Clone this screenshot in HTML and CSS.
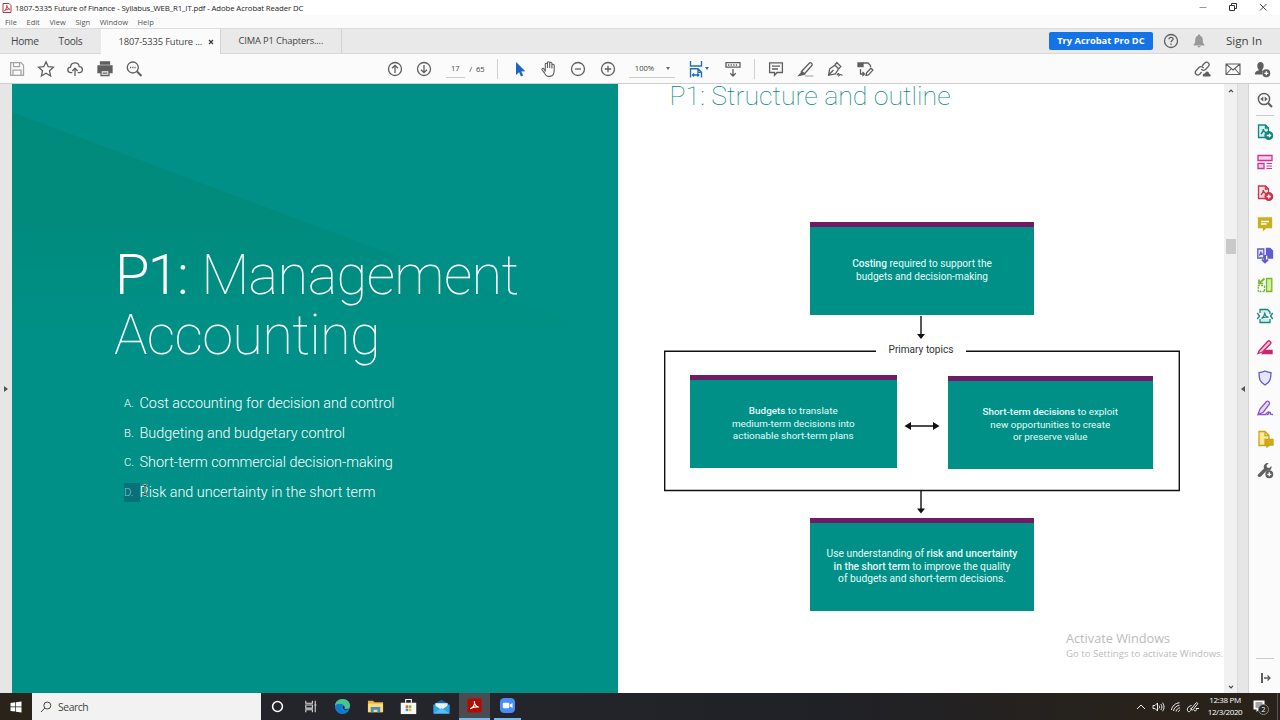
FILE: index.html
```
<!DOCTYPE html>
<html lang="en">
  <head>
    <meta charset="UTF-8" />
    <meta name="viewport" content="width=device-width, initial-scale=1.0" />
    <title>1807-5335 Future of Finance - Syllabus_WEB_R1_IT.pdf</title>
    <link rel="stylesheet" href="styles.css">
  </head>
  <body>
    <header class="titlebar">
      <svg class="app-icon" viewBox="0 0 10 10"><path d="M1 .5h6l2 2v7H1z" fill="#fff" stroke="#b5343c"/><path d="M2.5 7.8C4.5 6 5 4 4.8 2.3c.3 2 1.5 3.7 3 4C6 6 4 6.500 2.500 7.800z" fill="none" stroke="#c9252d" stroke-width=".9"/></svg>
      <span class="window-title">1807-5335 Future of Finance - Syllabus_WEB_R1_IT.pdf - Adobe Acrobat Reader DC</span>
      <div class="window-buttons">
        <svg viewBox="0 0 10 10"><path d="M1.500 5.500h7" stroke="#999"/></svg>
        <svg viewBox="0 0 10 10"><path d="M1.500 3.500h5v5h-5zM3.500 3.500v-2h5v5h-2" fill="none" stroke="#333"/></svg>
        <svg viewBox="0 0 10 10"><path d="M2 2l6.500 6.500M8.500 2L2 8.500" stroke="#333" stroke-width=".9"/></svg>
      </div>
    </header>

    <nav class="menubar">
      <span>File</span><span>Edit</span><span>View</span><span>Sign</span><span>Window</span><span>Help</span>
    </nav>

    <div class="tabs">
      <div class="tab-fixed"><span>Home</span><span>Tools</span></div>
      <div class="tab active"><span>1807-5335 Future ...</span><svg viewBox="0 0 6 6"><path d="M1 1l4 4M5 1L1 5" stroke="#333" stroke-width="1.100"/></svg></div>
      <div class="tab"><span>CIMA P1 Chapters....</span></div>
      <div class="account">
        <button class="try">Try Acrobat Pro DC</button>
        <svg class="icon help" viewBox="0 0 18 18"><circle cx="9" cy="9" r="6.500"/><path d="M7 7.300c0-2.700 4.100-2.600 4.100-.2 0 1.400-2.100 1.600-2.100 3.200M9 11.600v1.300"/></svg>
        <svg class="icon bell" viewBox="0 0 18 18"><path d="M9 2.500c.8 0 1.200.5 1.200 1.300 1.900.7 2.600 2.300 2.600 4.700 0 2 .5 3 1.500 4v.9H3.700v-.9c1-1 1.500-2 1.500-4 0-2.400.7-4 2.600-4.700 0-.8.4-1.300 1.200-1.300zM7.500 14h3c-.1 1-.7 1.400-1.500 1.400S7.600 15 7.500 14z"/></svg>
        <span class="sign-in">Sign In</span>
      </div>
    </div>

    <div class="toolbar">
      <div class="tools file-tools">
        <svg class="icon muted" viewBox="0 0 18 18"><path d="M2.600 2.600h10.300l2.600 2.600v10.200H2.600zM5.500 2.600v4h6v-4M5 15.400v-5.300h8v5.300"/></svg>
        <svg class="icon" viewBox="0 0 18 18"><path d="M9 1.800l2.200 4.900 5.200.5-3.900 3.500 1.100 5.300L9 13.300 4.400 16l1.100-5.300-3.900-3.500 5.200-.5z"/></svg>
        <svg class="icon" viewBox="0 0 18 18"><path d="M6.300 12.600H5C.8 12.600.9 7.500 4.500 7.200 4.900 1.600 12.600 1.400 13.200 6.700c4.300.1 4.200 5.900.2 5.900h-1.700M9 16V8.500M6.300 11L9 8.200l2.700 2.800"/></svg>
        <svg class="icon" viewBox="0 0 18 18"><path class="solid" d="M4.500 2h9v2h-9zM2 6h14v6.500h-2.500V10h-9v2.500H2z"/><path d="M5 10.500h8v5H5zM6.500 13.200h5"/></svg>
        <svg class="icon" viewBox="0 0 18 18"><circle cx="7.800" cy="7.500" r="5.500"/><path d="M12 11.500l4.500 4.500" stroke-width="2"/><path d="M5 7.500h1.200M7.200 7.500h1.200M9.400 7.500h1.200" stroke-width="1.500"/></svg>
      </div>
      <div class="tools page-tools">
        <svg class="icon" viewBox="0 0 18 18"><circle cx="9" cy="9" r="6.500"/><path d="M9 13V5.500M6 8.300l3-3 3 3"/></svg>
        <svg class="icon" viewBox="0 0 18 18"><circle cx="9" cy="9" r="6.500"/><path d="M9 5v7.500M6 9.700l3 3 3-3"/></svg>
        <span class="field page-no">17</span>
        <span class="page-total">/&nbsp; 65</span>
      </div>
      <i class="divider"></i>
      <div class="tools view-tools">
        <svg class="icon pointer" viewBox="0 0 18 18"><path d="M5 2v13l3.100-2.700L10 16.400l2.200-1-1.900-3.900 4-.3z"/></svg>
        <svg class="icon" viewBox="0 0 18 18"><path d="M5.300 10V4.300c0-1.500 2.200-1.500 2.200 0V8 2.800c0-1.500 2.200-1.500 2.200 0V8 3.300c0-1.500 2.200-1.500 2.200 0v5.200-3.200c0-1.400 2.300-1.400 2.300 0v5.200c0 7.300-7.800 7.400-9.600 2.600L1.900 9.800C1.500 8.300 3.300 7.900 4 9l1.300 2.400z" stroke-width="1.100"/></svg>
        <svg class="icon" viewBox="0 0 18 18"><circle cx="9" cy="9" r="6.500"/><path d="M6 9h6"/></svg>
        <svg class="icon" viewBox="0 0 18 18"><circle cx="9" cy="9" r="6.500"/><path d="M5.800 9h6.400M9 5.800v6.400"/></svg>
      </div>
      <div class="field zoom"><span>100%</span><i class="caret"></i></div>
      <div class="fit">
        <svg class="icon blue" viewBox="0 0 18 18"><path d="M3.500 1v5h11V1M3.500 17.500V8.800h7.500l3.500 3.400v5.300M11 9v3.400h3.300M5.500 15h6M7 13.500L5.500 15 7 16.500M10.300 13.500l1.500 1.500-1.500 1.500" stroke-width="1.400"/></svg>
        <i class="caret blue"></i>
      </div>
      <svg class="icon keys" viewBox="0 0 18 18"><path d="M2 2.700h14v4.500H2zM9 9v7M6.300 13.300L9 16l2.700-2.700"/><path d="M4 5h10" stroke-dasharray="1.300 1.300" stroke-width="1.600"/></svg>
      <i class="divider second"></i>
      <div class="tools comment-tools">
        <svg class="icon" viewBox="0 0 18 18"><path d="M2.600 2.800h12.800v9.700H10L7.500 15.300v-2.800H2.600zM5 6.200h8M5 9h6"/></svg>
        <svg class="icon" viewBox="0 0 18 18"><path d="M8 16h8.500" stroke="#ccc" stroke-width="2"/><path class="solid" d="M2 15.500l3-3.500 2.200 2.300z"/><path d="M4.500 11.500L12.500 3c1-1 3.500 1 2.500 2.300l-7.500 8.500z"/></svg>
        <svg class="icon" viewBox="0 0 18 18"><path d="M2.500 15.300l1.200-6.500L9 5.200l3.600 3.600-3.300 5.200zM2.700 15l4.700-5M9 5l1.800-2.500 4 4L12.500 9M11 15.300c1.500-3 2.100-1.500 2 0 1.500-1.500 1.500-.5 3.500 0"/></svg>
        <svg class="icon" viewBox="0 0 18 18"><path class="solid" d="M2 3h5v3.500H2z"/><path d="M7 3h5l2.500 2.500V7M4.500 9v5h4M6.500 12l2 2-2 2M10 15.500l.6-2.600 4.300-4.700 2 1.900-4.500 4.900z"/></svg>
      </div>
      <div class="tools share-tools">
        <svg class="icon" viewBox="0 0 18 18"><path d="M8 6l2.700-3c2.700-2.200 5.800.8 3.700 3.400L11.500 9.500C9.800 11 8 10.200 7.500 9M9.600 8C8 6 6 6.500 5 7.500l-3 3.200c-2.100 2.800 1 5.700 3.700 3.500L7.500 12"/><path class="solid" stroke="none" d="M9 16.500c-1-2.500 1-3.500 2-3 1-3 4-2 4 .2 2 0 2 2.800 1 2.800z"/></svg>
        <svg class="icon" viewBox="0 0 18 18"><path d="M2 4h14v10.500H2zM2 4l7 6 7-6M2 14.500L7 9M16 14.500L11 9" stroke-width="1.100"/></svg>
        <svg class="icon" viewBox="0 0 18 18"><path class="solid" stroke="none" d="M2 14.500c0-3 1-3.300 4-4.300C3.500 7.500 3.500 2 7.500 2s4 5.500 1.500 8.200l1 .8c-1 1-1 2.500-.5 3.500z"/><circle class="solid" cx="13.300" cy="13.300" r="3.300"/><path d="M11.300 13.300h4M13.300 11.300v4" stroke="#fff"/></svg>
      </div>
    </div>

    <main class="workspace">
      <div class="left-strip"><i></i></div>

      <section class="page cover">
        <h1><b>P1:</b> Management<br><span class="line-two">Accounting</span></h1>
        <ol>
          <li><i>A.</i>Cost accounting for decision and control</li>
          <li><i>B.</i>Budgeting and budgetary control</li>
          <li><i>C.</i>Short-term commercial decision-making</li>
          <li><i class="selected">D.</i>Risk and uncertainty in the short term</li>
        </ol>
        <svg class="text-cursor" viewBox="0 0 8 12"><path d="M1 1h2l1 1 1-1h2M4 2v8M1 11h2l1-1 1 1h2" fill="none" stroke="#9fc9cb" stroke-width="2"/><path d="M1 1h2l1 1 1-1h2M4 2v8M1 11h2l1-1 1 1h2" fill="none" stroke="#234b50"/></svg>
      </section>

      <section class="page outline">
        <h2>P1: Structure and outline</h2>
        <svg class="connectors" viewBox="0 0 606 609">
          <path class="line" d="M258 267.200H46.700V406.500H561.300V267.200H348M303 232v19M303 406.500v18.500M290 342h28"/>
          <path d="M299 250h8l-4 5zM299 424.500h8l-4 5zM293 338v8l-6.500-4zM315 338v8l6.500-4z"/>
        </svg>
        <div class="box costing"><p><b>Costing</b> required to support the<br>budgets and decision-making</p></div>
        <div class="frame-label">Primary topics</div>
        <div class="box budgets"><p><b>Budgets</b> to translate<br>medium-term decisions into<br>actionable short-term plans</p></div>
        <div class="box decisions"><p><b>Short-term decisions</b> to exploit<br>new opportunities to create<br>or preserve value</p></div>
        <div class="box risk"><p>Use understanding of <b>risk and uncertainty<br>in the short term</b> to improve the quality<br>of budgets and short-term decisions.</p></div>
        <div class="activate"><strong>Activate Windows</strong><span>Go to Settings to activate Windows.</span></div>
      </section>

      <div class="scrollbar">
        <svg viewBox="0 0 6 4"><path d="M1 3.200l2-2 2 2"/></svg>
        <div class="track"><i class="thumb"></i></div>
        <svg viewBox="0 0 6 4"><path d="M1 .8l2 2 2-2"/></svg>
      </div>
      <div class="right-strip"><i></i></div>

      <aside class="side">
        <svg class="icon" viewBox="0 0 18 18"><circle cx="8" cy="8" r="5.600" stroke-width="1.500"/><path d="M12 12l4 4" stroke-width="2.200"/><path class="solid" stroke="none" d="M7.300 5.500v5L4.300 8zM8.700 5.500v5l3-2.500z"/></svg>
        <hr>
        <svg class="icon teal" viewBox="0 0 18 18"><path class="tint" d="M2.500 2h7l3 3v9.500h-10z"/><path d="M5 11c2-2 2.500-3.500 2.300-5 .3 2 1.700 3.500 3 3.800M9.500 2v3h3"/><circle class="solid" cx="12.800" cy="12.500" r="3.800"/><path d="M10.800 12.500h3.700M13 10.900l1.600 1.600-1.600 1.600" stroke="#fff"/></svg>
        <svg class="icon pink" viewBox="0 0 18 18"><path class="tint" d="M2 2.500h14v5H2zM2 10.500h6v5H2z"/><path d="M10.500 10.500H16M10.500 13H16M10.500 15.500H16" stroke-width="1"/></svg>
        <svg class="icon red" viewBox="0 0 18 18"><path class="tint" d="M2.500 2h7l3 3v9.500h-10z"/><path d="M5 11c2-2 2.500-3.500 2.300-5 .3 2 1.700 3.500 3 3.800M9.500 2v3h3"/><circle class="solid" cx="12.800" cy="12.500" r="3.800"/><path d="M10.800 12.500h4M12.800 10.500v4" stroke="#fff"/></svg>
        <svg class="icon yellow" viewBox="0 0 18 18"><path class="solid" d="M2.500 3h13v9.500H10L7.500 15v-2.500h-5z"/><path d="M5 6.500h8M5 9h5.500" stroke="#fff"/></svg>
        <svg class="icon indigo" viewBox="0 0 18 18"><path class="tint" d="M1.800 3h6v9h-6z"/><path d="M3.200 9.500C5 8 5 7 4.800 5.500c.2 1.500 1 2.500 2 3"/><path class="solid" d="M10.500 2.500h3.500l2.500 2.300V12H12V9h-1.500z"/><path d="M9 9v7M6 13.500l3 2.800 3-2.800" stroke-width="2"/></svg>
        <svg class="icon green" viewBox="0 0 18 18"><path class="tint" d="M10.500 2.500h5.300v13h-5.300z"/><path d="M8.500 15.500H2.300v-6H8.500M8.500 10v5" stroke-dasharray="2 1"/><path d="M8.500 2.500L4 6.500M3 3.500v4h4.200" stroke-width="1.700"/></svg>
        <svg class="icon aqua" viewBox="0 0 18 18"><path class="tint" d="M4 6V2.500h7.500L14 5v2M4 12v3.500h10V12"/><path d="M5.500 11.500C8 9.500 9 8 8.600 5.500 9 8 10.500 10 12.500 10.300 10 9.800 7 10.500 5.500 11.500M1.300 6L3.500 9l-2.200 3M16.700 6l-2.200 3 2.200 3"/></svg>
        <svg class="icon rose" viewBox="0 0 18 18"><path class="tint" d="M3 13l8.800-9.800c1.300-1.200 4 1 2.800 2.500L6.500 14 2 15.500z"/><path class="solid" d="M9 12.500h7v3H6.500z"/></svg>
        <svg class="icon indigo" viewBox="0 0 18 18"><path class="tint" d="M9 2c2 1 4 1.500 6 1.600 0 6.500-1 9.500-6 12.400-5-2.900-6-5.900-6-12.400C5 3.500 7 3 9 2z"/></svg>
        <svg class="icon violet" viewBox="0 0 18 18"><path class="tint" d="M2 15.500l2-5.500 6.500-7.500c1.300-1.200 4 1 2.800 2.700L7.500 13z"/><path d="M2 15.500h7.500c4.500-6 3.500 0 2 0 2.500-4 3.500-2 2.500 0 1-.8 1.500 0 3 0"/></svg>
        <svg class="icon amber" viewBox="0 0 18 18"><path class="tint" d="M3 1.500h6l4 4v10H3zM9 1.500v4h4"/><path class="solid" d="M9 9.500h8v5.500h-4l-2 2v-2H9z"/></svg>
        <svg class="icon" viewBox="0 0 18 18"><path class="solid" stroke="none" d="M2 13.500l6-6C7 4.500 9.500 1.500 12.500 2.200L10.500 4.500l.6 2 2.200.5 2-2.100c.7 2-.3 3.800-2 4.600-1.200-.2-2.500.2-3.500 1.100l-4.700 4.700c-2 1.500-4.400-.2-3.100-1.800z"/><circle class="solid" cx="13.300" cy="13.300" r="3.300"/><path d="M11.300 13.300h4M13.300 11.300v4" stroke="#fff"/></svg>
        <hr class="bottom-rule">
        <svg class="icon" viewBox="0 0 18 18"><path d="M6 4v10" stroke-width="2"/><path d="M8 9h6M11.500 6.500L14 9l-2.500 2.500"/></svg>
      </aside>
    </main>

    <footer class="taskbar">
      <div class="start"><svg viewBox="0 0 12 12"><path d="M.5 2l4.800-.7v4.300H.5zM6 1.200l5.500-.8v5.200H6zM.5 6.300h4.800v4.300L.5 9.900zM6 6.300h5.500v5.200L6 10.700z"/></svg></div>
      <div class="search"><svg viewBox="0 0 12 12"><circle cx="7.300" cy="4.500" r="3.500"/><path d="M4.800 7L1 11"/></svg><span>Search</span></div>
      <div class="apps">
        <div class="app"><svg viewBox="0 0 18 18"><circle cx="9" cy="9" r="5.200" fill="none" stroke="#fff" stroke-width="1.600"/></svg></div>
        <div class="app"><svg viewBox="0 0 18 18"><path d="M4 3v2.500h7V3M4 15v-2.500h7V15M4 7.300h7v3.400H4zM14 3v12M13 7.500h2.300" fill="none" stroke="#ddd" stroke-width="1.100"/></svg></div>
        <div class="app"><svg viewBox="0 0 18 18"><circle cx="9" cy="9" r="8" fill="#1682d2"/><path d="M1 9C1 4 4.500 1 9 1c5 0 8 3.500 8 7 0 3-3 4-6 3.500 1-1.500.5-4-2-4.500C5 6 2 7.500 1 9z" fill="#48c690"/><path d="M1.200 8.500C3 5.300 9 5 10.300 8.500 8.500 7.500 7 9.500 7.700 12c.6 2.200 3.800 3.400 7 1.800-4 5-13.500 3.200-13.500-5.300z" fill="#1677c8"/><path d="M10.500 8.500c-2 .3-1.500 3.800 2 4.500 1.500.3 2.600-.2 3.500-1-1.500.6-4 .2-5-.7.300-1 .200-2-.5-2.800z" fill="#24242a"/></svg></div>
        <div class="app"><svg viewBox="0 0 18 18"><path d="M1 3h5.500l1.500 1.500h9V15H1z" fill="#eeb538"/><path d="M1 6h16v9H1z" fill="#ffda72"/><path d="M4 15V9.500h10V15h-3v-2.500H7V15z" fill="#3c91cf"/></svg></div>
        <div class="app"><svg viewBox="0 0 18 18"><path d="M.8 5h16.400v12H.8z" fill="#f5f5f5"/><path d="M6 5V1.600h6V5" fill="none" stroke="#f5f5f5" stroke-width="1.200"/><path d="M6 7.800h2.700v2.700H6z" fill="#e8582b"/><path d="M9.300 7.800H12v2.700H9.300z" fill="#7db72f"/><path d="M6 11.200h2.700v2.700H6z" fill="#299be0"/><path d="M9.300 11.200H12v2.700H9.300z" fill="#f4b51e"/></svg></div>
        <div class="app"><svg viewBox="0 0 18 18"><path d="M.5 7L9 1.800 17.500 7v9.500H.5z" fill="#1767ad"/><path d="M2.500 5.500h13V12h-13z" fill="#e9f3f9"/><path d="M.5 7L9 12.500 17.500 7v9.500H.5z" fill="#31a2e5"/><path d="M.5 16.500l8.500-6 8.500 6z" fill="#57bdf2"/></svg></div>
        <div class="app current"><svg viewBox="0 0 18 18"><rect x="1.500" y="1.500" width="15" height="15" rx="2" fill="#b30b00"/><path d="M4.500 12.500C8 10.500 9.500 7 8.800 4.500c-.2 2.500 1.700 6 4.700 6.200-3-.5-6.500 0-9 1.800z" fill="none" stroke="#fff" stroke-width="1.200"/></svg></div>
        <div class="app open"><svg viewBox="0 0 18 18"><rect x="1" y="1" width="16" height="16" rx="4.500" fill="#4a8df8"/><rect x="4" y="6" width="7" height="6" rx="1.500" fill="#fff"/><path d="M11.600 8l2.700-1.700v5.400L11.600 10z" fill="#fff"/></svg></div>
      </div>
      <div class="tray">
        <svg viewBox="0 0 14 14"><path d="M3 9l4-4 4 4"/></svg>
        <svg viewBox="0 0 14 14"><path d="M2 5.500h2L6.500 3v8L4 8.500H2zM8 5.500c.8 1 .8 2 0 3M9.800 4c1.500 2 1.500 4 0 6M11.500 2.700c2 2.700 2 6 0 8.600"/></svg>
        <svg viewBox="0 0 14 14"><path d="M2.500 10C3 6 6.500 3 10.500 2.800M4.500 11c.5-3 3-5.500 6-5.700M7 11.500C7.500 9.500 9 8 11 7.800M9.200 11.800c.3-.9.900-1.400 1.700-1.600"/></svg>
        <svg viewBox="0 0 14 14"><path d="M5 9l5-6c1-1 2.300.2 1.500 1.200l-5 6zM5.500 5.500c-4 1-5 4-3.500 6 2 1 4-2 2.500-3M8 10.500c2 1 3-.5 2-2h3"/></svg>
      </div>
      <div class="clock"><span>12:38 PM</span><span>12/3/2020</span></div>
      <div class="notice">
        <svg viewBox="0 0 14 14"><path d="M1.500 1.500h11v9H7l-2.500 2.500v-2.500h-3z" fill="#fff"/><path d="M3.500 4h7M3.500 6h7M3.500 8h4" stroke="#39342c" stroke-width=".9"/></svg>
        <span class="badge">2</span>
      </div>
      <i class="show-desktop"></i>
    </footer>
  </body>
</html>
```
FILE: styles.css
```
* {
  box-sizing: border-box;
}

body {
  margin: 0;
  width: 1280px;
  height: 720px;
  display: flex;
  flex-direction: column;
  overflow: hidden;
  background: #fbfbfb;
  color: #444;
  font-family: "Open Sans", "Noto Sans", sans-serif;
  font-size: 8px;
}

svg {
  display: block;
  flex: none;
}

/* Window chrome */
.titlebar {
  height: 15px;
  display: flex;
  align-items: center;
  background: #fff;
  padding-left: 2px;
}

.app-icon {
  width: 10px;
  height: 10px;
}

.window-title {
  margin-left: 3px;
  color: #222;
  font-size: 7.8px;
  letter-spacing: -0.12px;
  white-space: nowrap;
}

.window-buttons {
  display: flex;
  gap: 20px;
  margin: -1px 12px 0 auto;
}

.window-buttons svg {
  width: 10px;
  height: 10px;
}

.menubar {
  height: 13px;
  display: flex;
  align-items: center;
  gap: 9.6px;
  padding-left: 5px;
  font-size: 7.5px;
  color: #555;
}

.tabs {
  height: 26px;
  display: flex;
  background: #e9e9e9;
  border-top: 1px solid #dcdcdc;
  border-bottom: 1px solid #d9d9d9;
  line-height: 24px;
  font-size: 9.4px;
}

.tab-fixed {
  width: 101px;
  display: flex;
  gap: 20px;
  padding-left: 11px;
  font-size: 10.2px;
  letter-spacing: -0.3px;
}

.tab {
  width: 121px;
  display: flex;
  align-items: center;
  padding-left: 17.5px;
  letter-spacing: -0.17px;
  border-right: 1px solid #d2d2d2;
}

.tab.active {
  height: 25px;
  width: 120px;
  background: #fbfbfb;
}

.tab svg {
  width: 6px;
  height: 6px;
  margin-left: 6px;
}

.account {
  display: flex;
  align-items: center;
  margin-left: auto;
  padding-right: 18px;
}

.try {
  width: 104px;
  height: 18px;
  padding: 0;
  border: 0;
  border-radius: 2px;
  background: #1473e6;
  color: #fff;
  font: 700 9.3px/18px "Open Sans", sans-serif;
}

.help {
  margin-left: 9px;
}

.icon.bell {
  margin-left: 10px;
  fill: #999;
  stroke: none;
}

.sign-in {
  margin-left: 18px;
  font-size: 11.6px;
}

.icon {
  width: 18px;
  height: 18px;
  fill: none;
  stroke: #5f5f5f;
  stroke-width: 1.3;
}

.icon .solid {
  fill: #5f5f5f;
}

.icon.muted {
  stroke: #a5a5a5;
}

.icon.blue {
  stroke: #2170b8;
}

.icon.pointer {
  fill: #1b68c2;
  stroke: none;
}

/* Toolbar */
.toolbar {
  height: 30px;
  display: flex;
  align-items: center;
  padding: 0 9px 0 7.5px;
  border-bottom: 1px solid #cfcfcf;
}

.tools {
  display: flex;
  align-items: center;
  gap: 11.4px;
}

.page-tools {
  margin-left: 243px;
}

.field {
  height: 19px;
  border-bottom: 1px solid #ccc;
  line-height: 19px;
  font-size: 7.6px;
}

.page-no {
  width: 19px;
  margin-left: 1px;
  text-align: center;
}

.page-total {
  margin-left: -7px;
  font-size: 7.6px;
}

.divider {
  width: 1px;
  height: 20px;
  margin-left: 12px;
  background: #d0d0d0;
}

.view-tools {
  margin-left: 13px;
}

.zoom {
  width: 46px;
  display: flex;
  align-items: center;
  justify-content: space-between;
  margin-left: 12px;
  padding: 0 5px 0 6px;
}

.caret {
  border: 2.5px solid transparent;
  border-top: 3px solid #666;
  border-bottom: 0;
}

.caret.blue {
  border-top-color: #2170b8;
}

.fit {
  display: flex;
  align-items: center;
  margin-left: 12px;
}

.keys {
  margin-left: 15px;
}

.divider.second {
  margin-left: 12px;
}

.comment-tools {
  margin-left: 12.5px;
}

.share-tools {
  margin-left: auto;
}

/* Document area */
.workspace {
  height: 609px;
  display: flex;
}

.left-strip,
.right-strip {
  width: 12px;
  display: flex;
  align-items: center;
  justify-content: center;
  background: #e6e6e6;
}

.left-strip i {
  border: 3px solid transparent;
  border-left: 4px solid #555;
  border-right: 0;
}

.right-strip {
  border-right: 1px solid #d3d3d3;
  border-left: 1px solid #dadada;
}

.right-strip i {
  border: 3px solid transparent;
  border-right: 4px solid #555;
  border-left: 0;
}

.page {
  position: relative;
  width: 606px;
  overflow: hidden;
  font-family: Roboto, sans-serif;
}

.cover {
  background: #009087;
  color: #fff;
  padding: 161px 0 0 103px;
}

/* darker wedge behind the title */
.cover::before {
  content: "";
  position: absolute;
  inset: 0;
  background: linear-gradient(#008a7b, #008b7d 45%, rgba(0, 144, 135, 0) 85%);
  clip-path: polygon(0 28px, 100% 255px, 100% 300px, 0 300px);
  height: 300px;
}

.cover h1,
.cover ol {
  position: relative;
}

.cover h1 {
  margin: 0;
  font-size: 56px;
  font-weight: 100;
  line-height: 60px;
  letter-spacing: -0.6px;
  white-space: nowrap;
}

.cover h1 b {
  margin-right: 1.5px;
  font-weight: 350;
  letter-spacing: -1.8px;
}

.line-two {
  margin-left: -1px;
  letter-spacing: -0.7px;
}

.cover ol {
  margin: 24px 0 0 9px;
  padding: 0;
  list-style: none;
  font-size: 14.4px;
  font-weight: 300;
  line-height: 29.6px;
}

.cover li {
  display: flex;
  align-items: center;
}

.cover li i {
  width: 15.500px;
  font-size: 11.3px;
  font-style: normal;
  line-height: 18px;
  padding-top: 1px;
}

.cover .selected {
  background: #087078;
  color: #7fc5d6;
}

.text-cursor {
  position: absolute;
  left: 129px;
  top: 400px;
  width: 8px;
  height: 12px;
}

.outline {
  background: #fff;
}

.outline h2 {
  margin: -4px 0 0 51.5px;
  color: #00897b;
  font-size: 26.7px;
  font-weight: 100;
  line-height: 32px;
}

.connectors {
  position: absolute;
  left: 0;
  top: 0;
  width: 606px;
  height: 609px;
  fill: #111;
}

.connectors .line {
  fill: none;
  stroke: #111;
  stroke-width: 1.4;
}

.box {
  position: absolute;
  width: 224px;
  height: 92.5px;
  display: flex;
  align-items: center;
  justify-content: center;
  background: #009087;
  border-top: 5px solid #6f1b66;
  color: #e4fbf8;
  font-size: 10.1px;
  line-height: 12.3px;
  text-align: center;
  white-space: nowrap;
}

.box p {
  margin: 0;
}

.box b {
  font-weight: 500;
}

.costing {
  left: 192px;
  top: 138px;
}

.budgets {
  left: 72px;
  top: 291px;
  width: 206.5px;
  font-size: 9.9px;
}

.decisions {
  left: 329.5px;
  top: 292px;
  width: 205.5px;
  font-size: 9.85px;
}

.risk {
  left: 192px;
  top: 434px;
  font-size: 10.25px;
}

.frame-label {
  position: absolute;
  left: 258px;
  top: 260px;
  width: 90px;
  color: #333;
  font-size: 10.1px;
  line-height: 12px;
  text-align: center;
}

.activate {
  position: absolute;
  left: 448px;
  top: 546px;
  display: flex;
  flex-direction: column;
  color: #bbb;
  font-family: "Open Sans", sans-serif;
  font-size: 9.6px;
  line-height: 13px;
  white-space: nowrap;
}

.activate strong {
  font-size: 12.7px;
  font-weight: 400;
  line-height: 17px;
}

.scrollbar {
  width: 13px;
  display: flex;
  flex-direction: column;
  align-items: center;
  padding: 5px 0 4px;
  background: #f1f1f1;
}

.scrollbar svg {
  width: 6px;
  height: 4px;
  fill: none;
  stroke: #444;
  stroke-width: 1.2;
}

.track {
  flex: 1;
  width: 10px;
  padding-top: 146px;
}

.thumb {
  display: block;
  height: 15px;
  background: #c9c9c9;
}

.side {
  width: 31px;
  display: flex;
  flex-direction: column;
  align-items: center;
  gap: 12.75px;
  padding: 7px 0 6px;
  background: #fbfbfb;
}

.side hr {
  width: 18px;
  margin: -6.4px 0 -6.4px;
  border: 0;
  border-top: 1px solid #ccc;
}

.side .bottom-rule {
  margin: auto 0 -3px;
}

.teal { stroke: #12897b; --solid: #12897b; --tint: #d4f0ec; }
.pink { stroke: #d2318d; --solid: #d2318d; --tint: #f9d5ea; }
.red { stroke: #cf3348; --solid: #cf3348; --tint: #fbdfe2; }
.yellow { stroke: #c9b01c; --solid: #c9b01c; --tint: #f5eeb5; }
.indigo { stroke: #5f5bd0; --solid: #5f5bd0; --tint: #e6e6fb; }
.green { stroke: #76b82a; --solid: #76b82a; --tint: #d0f09b; }
.aqua { stroke: #14887f; --solid: #14887f; --tint: #d2efed; }
.rose { stroke: #c9256c; --solid: #c9256c; --tint: #f6bfd6; }
.violet { stroke: #8755cd; --solid: #8755cd; --tint: #e7d8f8; }
.amber { stroke: #c9a41b; --solid: #d2aa0d; --tint: #f8e999; }

.side .solid {
  fill: var(--solid, #5f5f5f);
}

.side .tint {
  fill: var(--tint);
}

/* Taskbar */
.taskbar {
  height: 27px;
  display: flex;
  background: linear-gradient(90deg, #24252b 40%, #202127 65%, #28221a 90%);
  color: #fff;
}

.start {
  width: 32px;
  display: flex;
  align-items: center;
  justify-content: center;
  background: #29231a;
}

.start svg {
  width: 12px;
  height: 12px;
  fill: #fff;
}

.search {
  width: 229px;
  display: flex;
  align-items: center;
  gap: 6px;
  padding-left: 8px;
  background: #f2f2f2;
  color: #444;
  font-size: 10.4px;
  letter-spacing: -0.45px;
}

.search svg {
  width: 12px;
  height: 12px;
  fill: none;
  stroke: #444;
}

.apps {
  display: flex;
}

.app {
  width: 32.8px;
  display: flex;
  align-items: center;
  justify-content: center;
  border-bottom: 1px solid transparent;
}

.app svg {
  width: 17px;
  height: 17px;
}

.app.current {
  width: 31px;
  margin: 0 1px;
  background: #4b4c51;
  border-bottom: 2px solid #76b9ed;
}

.app.open {
  width: 27px;
  margin: 0 3px;
  border-bottom: 2px solid #76b9ed;
}

.tray {
  display: flex;
  align-items: center;
  gap: 3.5px;
  margin-left: auto;
}

.tray svg {
  width: 14px;
  height: 14px;
  fill: none;
  stroke: #eee;
  stroke-width: 1;
}

.clock {
  width: 36px;
  display: flex;
  flex-direction: column;
  align-items: center;
  justify-content: center;
  margin: -1px 0 0 7px;
  font-size: 8px;
  line-height: 12px;
  letter-spacing: -0.36px;
  white-space: nowrap;
}

.notice {
  position: relative;
  width: 14px;
  margin: 6px 0 0 9px;
}

.notice svg {
  width: 14px;
  height: 14px;
}

.badge {
  position: absolute;
  left: 6px;
  top: 5px;
  width: 11px;
  height: 11px;
  border: 1px solid #888;
  border-radius: 50%;
  background: #28241e;
  font-size: 7.5px;
  line-height: 9px;
  text-align: center;
}

.show-desktop {
  width: 3px;
  margin-left: 11px;
  border-left: 1px solid #555;
}
```
